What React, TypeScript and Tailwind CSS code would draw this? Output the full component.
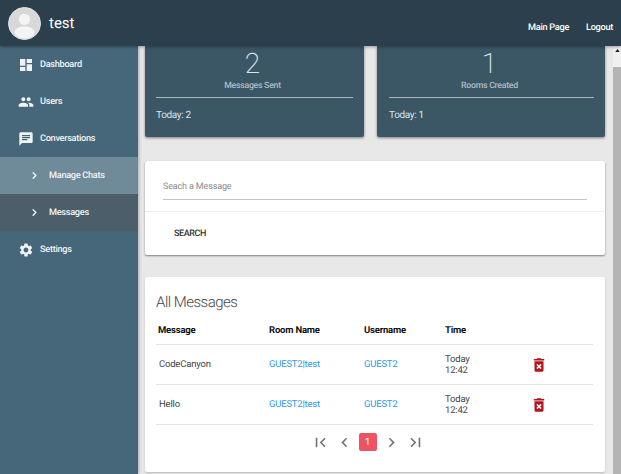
import React from "react";
import { MdDashboard, MdPeople, MdChat, MdSettings, MdDeleteForever, MdChevronRight, MdChevronLeft, MdFirstPage, MdLastPage } from "react-icons/md";
import { ChevronRight } from "lucide-react";

function Stat({ n, label, today, box }: { n: string; label: string; today: string; box: string }) {
  return (
    <div className={`${box} h-[91px] bg-[#3b5766] rounded-b-[2px] shadow-[0_1px_3px_rgba(0,0,0,0.45)] flex flex-col items-stretch`}>
      <div className="text-[28px] leading-[30px] font-extralight text-[#dfe6ea] text-center mt-[3px] pr-[4px]">{n}</div>
      <div className="text-[8.8px] tracking-[-0.3px] leading-[12px] font-medium text-[#aebcc4] text-center mt-[1px] pr-[4px]">{label}</div>
      <div className="h-px bg-[#a9b8c0] mt-[5px]" />
      <div className="text-[10px] tracking-[-0.35px] leading-[14px] text-[#dde4e8] mt-[11px]">{today}</div>
    </div>
  );
}

function NavItem({ icon, label }: { icon: React.ReactNode; label: string }) {
  return (
    <div className="h-[37px] flex items-center pl-[18px] text-[#f1f4f6]">
      <span className="w-[22px] flex justify-start text-[16px]">{icon}</span>
      <span className="text-[9.2px] tracking-[-0.3px] font-medium">{label}</span>
    </div>
  );
}

function SubItem({ label, bg }: { label: string; bg: string }) {
  return (
    <div className={`h-[37px] flex items-center pl-[24px] text-[#f1f4f6] ${bg}`}>
      <span className="w-[21px] mr-[4px] flex justify-center">
        <ChevronRight size={11} strokeWidth={3} />
      </span>
      <span className="text-[9.2px] tracking-[-0.3px] font-medium">{label}</span>
    </div>
  );
}

function Row({ msg }: { msg: string }) {
  return (
    <div className="grid grid-cols-[110px_95px_81px_85px_auto] h-[40px] items-center border-b border-[#e3e3e3] pl-[3px] pt-[2px] text-[9.5px] tracking-[-0.2px] text-[#444]">
      <span>{msg}</span>
      <span className="text-[#2d96e6]">GUEST2|test</span>
      <span className="text-[#2d96e6]">GUEST2</span>
      <span className="leading-[11px] -mt-[2px]">Today<br />12:42</span>
      <MdDeleteForever className="text-[18px] text-[#b5121b] -mt-[2px]" />
    </div>
  );
}

export default function App() {
  return (
    <div className="w-[621px] h-[474px] overflow-hidden flex flex-col bg-[#e8e8e8] [font-family:Roboto,sans-serif] [text-rendering:geometricPrecision]">
      <header className="h-[46px] shrink-0 bg-[#2b3f4c] shadow-[0_1px_3px_rgba(0,0,0,0.35)] z-10 flex items-center pl-[8px] pr-[8px]">
        <div className="w-[33px] h-[33px] rounded-full bg-[#d8d8d8] border border-[#e6e6e6] overflow-hidden">
          <svg viewBox="0 0 33 33" className="w-full h-full">
            <circle cx="16.5" cy="12" r="6" fill="#f4f4f4" />
            <ellipse cx="16.5" cy="26" rx="10.5" ry="6.5" fill="#f4f4f4" />
          </svg>
        </div>
        <span className="ml-[8px] text-[15px] text-white mt-[1px]">test</span>
        <nav className="ml-auto flex gap-[17px] text-[9.2px] tracking-[-0.3px] font-medium text-white mt-[10px]">
          <span>Main Page</span>
          <span>Logout</span>
        </nav>
      </header>
      <div className="flex flex-1 min-h-0">
        <aside className="w-[138px] shrink-0 bg-[#46677a] shadow-[1px_0_3px_rgba(0,0,0,0.25)]">
          <NavItem icon={<MdDashboard />} label="Dashboard" />
          <NavItem icon={<MdPeople />} label="Users" />
          <NavItem icon={<MdChat />} label="Conversations" />
          <SubItem label="Manage Chats" bg="bg-[#6f8a99]" />
          <SubItem label="Messages" bg="bg-[#4b5e69]" />
          <NavItem icon={<MdSettings />} label="Settings" />
        </aside>
        <main className="flex-1 min-w-0 pl-[7px] pr-[8px]">
          <div className="flex justify-between">
            <Stat n="2" label="Messages Sent" today="Today: 2" box="w-[219px] px-[11px]" />
            <Stat n="1" label="Rooms Created" today="Today: 1" box="w-[228px] pl-[12px] pr-[11px]" />
          </div>
          <section className="mt-[24px] h-[94px] bg-white rounded-[2px] shadow-[0_1px_2px_rgba(0,0,0,0.45)]">
            <div className="h-[51px] border-b border-[#eeeeee] px-[18px] pt-[20px]">
              <div className="text-[9px] tracking-[-0.15px] text-[#8a8a8a] leading-[12px] pb-[6px] border-b border-[#c4c4c4]">Seach a Message</div>
            </div>
            <div className="pl-[29px] pt-[9px] text-[9px] tracking-[-0.4px] leading-[26px] font-medium text-[#333]">SEARCH</div>
          </section>
          <section className="mt-[22px] h-[195px] bg-white rounded-[2px] shadow-[0_1px_2px_rgba(0,0,0,0.2)] px-[11px]">
            <h2 className="text-[15px] tracking-[-0.5px] leading-[20px] font-light text-[#444] pt-[15px] h-[35px]">All Messages</h2>
            <div className="w-[437px]">
              <div className="grid grid-cols-[111px_95px_81px_auto] h-[33px] items-center pt-[7px] border-b border-[#e3e3e3] pl-[2px] text-[9.5px] tracking-[-0.2px] font-bold text-[#111]">
                <span>Message</span>
                <span>Room Name</span>
                <span>Username</span>
                <span>Time</span>
              </div>
              <Row msg="CodeCanyon" />
              <Row msg="Hello" />
              <div className="flex items-center justify-center gap-[5px] h-[34px] text-[#6f7478] pr-[14px]">
                <MdFirstPage className="text-[19px]" />
                <MdChevronLeft className="text-[19px]" />
                <span className="w-[18px] h-[18px] rounded-[2px] bg-[#ef5361] text-white text-[10px] flex items-center justify-center">1</span>
                <MdChevronRight className="text-[19px]" />
                <MdLastPage className="text-[19px]" />
              </div>
            </div>
          </section>
        </main>
        <div className="w-[8px] shrink-0 flex flex-col">
          <div className="h-[21px] bg-[#f0f0f0] flex justify-center pt-[3px]">
            <svg viewBox="0 0 6 4" className="w-[5px] h-[3px]"><path d="M3 0 6 4H0z" fill="#222" /></svg>
          </div>
          <div className="flex-1 bg-[#b4b4b4]" />
        </div>
      </div>
    </div>
  );
}
